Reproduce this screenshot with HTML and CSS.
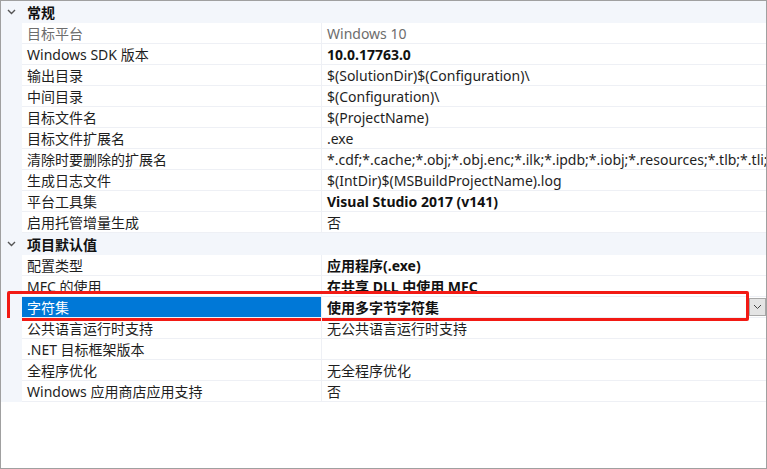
FILE: index.html
```html
<!DOCTYPE html>
<html lang="zh-CN">
<head>
    <meta charset="UTF-8">
    <title>属性</title>
    <link rel="stylesheet" href="styles.css">
</head>
<body>
    <div class="panel">
        <!-- 常规 -->
        <div class="category">
            <span class="toggle"><svg width="9" height="6" viewBox="0 0 9 6"><path d="M1 1 L4.5 4.5 L8 1" fill="none" stroke="#555" stroke-width="1.4"/></svg></span>
            <span class="cat-name">常规</span>
        </div>
        <div class="row"><span class="gutter"></span><span class="key muted">目标平台</span><span class="val muted">Windows 10</span></div>
        <div class="row"><span class="gutter"></span><span class="key">Windows SDK 版本</span><span class="val bold">10.0.17763.0</span></div>
        <div class="row"><span class="gutter"></span><span class="key">输出目录</span><span class="val">$(SolutionDir)$(Configuration)\</span></div>
        <div class="row"><span class="gutter"></span><span class="key">中间目录</span><span class="val">$(Configuration)\</span></div>
        <div class="row"><span class="gutter"></span><span class="key">目标文件名</span><span class="val">$(ProjectName)</span></div>
        <div class="row"><span class="gutter"></span><span class="key">目标文件扩展名</span><span class="val">.exe</span></div>
        <div class="row"><span class="gutter"></span><span class="key">清除时要删除的扩展名</span><span class="val">*.cdf;*.cache;*.obj;*.obj.enc;*.ilk;*.ipdb;*.iobj;*.resources;*.tlb;*.tli;*.tlh;*.tmp;*.rsp</span></div>
        <div class="row"><span class="gutter"></span><span class="key">生成日志文件</span><span class="val">$(IntDir)$(MSBuildProjectName).log</span></div>
        <div class="row"><span class="gutter"></span><span class="key">平台工具集</span><span class="val bold">Visual Studio 2017 (v141)</span></div>
        <div class="row"><span class="gutter"></span><span class="key">启用托管增量生成</span><span class="val">否</span></div>

        <!-- 项目默认值 -->
        <div class="category">
            <span class="toggle"><svg width="9" height="6" viewBox="0 0 9 6"><path d="M1 1 L4.5 4.5 L8 1" fill="none" stroke="#555" stroke-width="1.4"/></svg></span>
            <span class="cat-name">项目默认值</span>
        </div>
        <div class="row"><span class="gutter"></span><span class="key">配置类型</span><span class="val bold">应用程序(.exe)</span></div>
        <div class="row"><span class="gutter"></span><span class="key">MFC 的使用</span><span class="val bold">在共享 DLL 中使用 MFC</span></div>
        <div class="row selected">
            <span class="gutter"></span><span class="key">字符集</span>
            <span class="val bold">使用多字节字符集<span class="drop"><svg width="9" height="6" viewBox="0 0 9 6"><path d="M1 1 L4.5 4.5 L8 1" fill="none" stroke="#444" stroke-width="1"/></svg></span></span>
            <span class="mark"></span>
        </div>
        <div class="row"><span class="gutter"></span><span class="key">公共语言运行时支持</span><span class="val">无公共语言运行时支持</span></div>
        <div class="row"><span class="gutter"></span><span class="key">.NET 目标框架版本</span><span class="val"></span></div>
        <div class="row"><span class="gutter"></span><span class="key">全程序优化</span><span class="val">无全程序优化</span></div>
        <div class="row"><span class="gutter"></span><span class="key">Windows 应用商店应用支持</span><span class="val">否</span></div>
    </div>
</body>
</html>
```

FILE: styles.css
```css
html, body {
    margin: 0;
    padding: 0;
    background: #ffffff;
}

body {
    font-family: "Noto Sans", "Noto Sans CJK SC", sans-serif;
    font-size: 14px;
    color: #1e1e1e;
}

.panel {
    width: 767px;
    height: 469px;
    box-sizing: border-box;
    border: 1px solid #a0a0a0;
    overflow: hidden;
    position: relative;
}

/* 分类标题 */
.category {
    height: 22px;
    display: flex;
    align-items: center;
    background: #f3f6fb;
}

.category .toggle {
    width: 21px;
    display: flex;
    justify-content: center;
    padding-right: 1px;
    box-sizing: border-box;
}

.cat-name {
    padding-left: 5px;
    font-weight: bold;
    color: #111;
}

/* 属性行 */
.row {
    height: 21px;
    display: grid;
    grid-template-columns: 21px 300px 1fr;
    position: relative;
}

.gutter {
    background: #f3f6fb;
}

.key,
.val {
    display: flex;
    align-items: center;
    white-space: nowrap;
    overflow: hidden;
    border-bottom: 1px solid #eef0f5;
    box-sizing: border-box;
}

.key {
    padding-left: 5px;
    border-right: 1px solid #eef0f5;
}

.val {
    padding-left: 5px;
}

.muted {
    color: #6d6d6d;
}

.bold {
    font-weight: bold;
    color: #111;
}

.selected .key {
    background: #0078d7;
    color: #ffffff;
}

.drop {
    margin-left: auto;
    width: 17px;
    height: 18px;
    box-sizing: border-box;
    border: 1px solid #a8a8a8;
    background: #e4e4e4;
    display: flex;
    align-items: center;
    justify-content: center;
}

/* 红色标注框 */
.mark {
    position: absolute;
    left: 6px;
    top: -6px;
    width: 742px;
    height: 30px;
    box-sizing: border-box;
    border: 3px solid #f21a14;
    border-radius: 2px;
    pointer-events: none;
}
```
